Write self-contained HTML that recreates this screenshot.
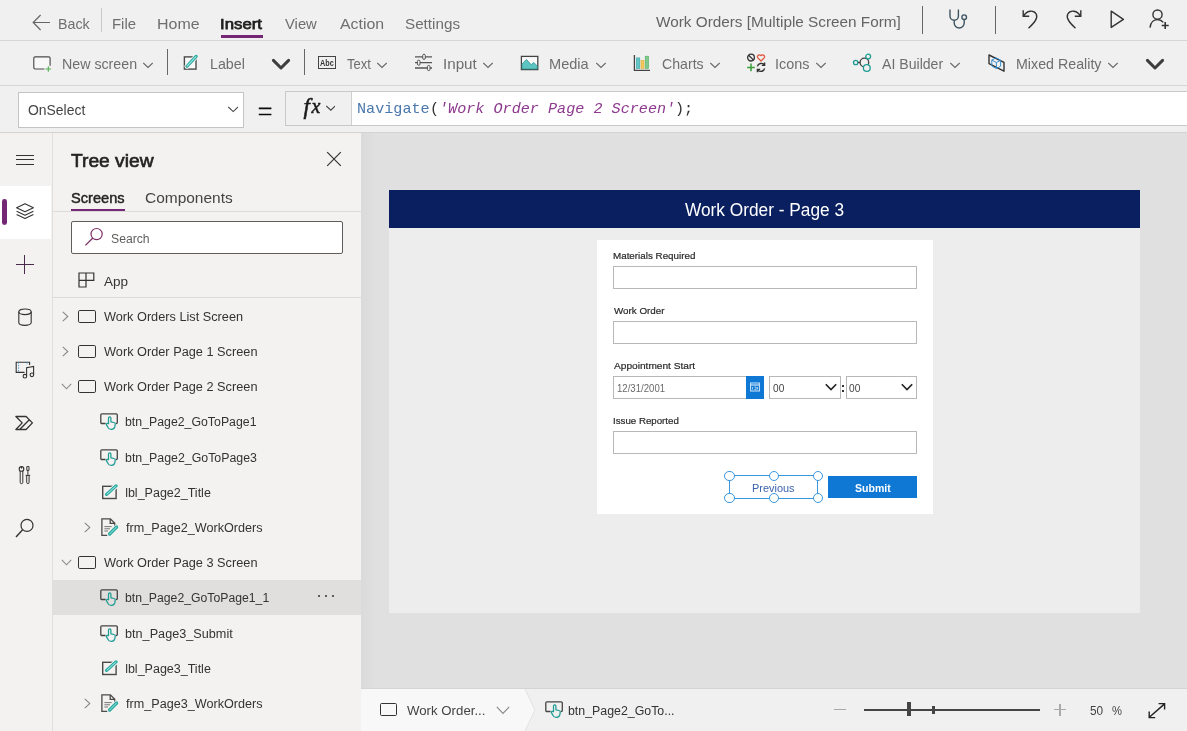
<!DOCTYPE html>
<html><head><meta charset="utf-8"><title>Power Apps</title>
<style>
html,body{margin:0;padding:0;}
body{width:1187px;height:731px;position:relative;overflow:hidden;background:#f3f2f1;font-family:"Liberation Sans",sans-serif;}
.r{position:absolute;box-sizing:border-box;display:block;}
.t{position:absolute;white-space:pre;transform-origin:0 50%;}
.mono{font-family:"Liberation Mono",monospace;}
.serif{font-family:"Liberation Serif",serif;}
#wrap{position:absolute;left:0;top:0;width:1187px;height:731px;overflow:hidden;will-change:transform;}
</style></head><body><div id="wrap">
<div class="r" style="left:0.00px;top:0.00px;width:1187.00px;height:132.00px;background:#f0f0f0;"></div>
<div class="r" style="left:0.00px;top:40.00px;width:1187.00px;height:1.00px;background:#d6d6d6;"></div>
<div class="r" style="left:0.00px;top:85.00px;width:1187.00px;height:1.00px;background:#d6d6d6;"></div>
<div class="r" style="left:0.00px;top:132.00px;width:1187.00px;height:1.00px;background:#d2d2d2;"></div>
<div class="r" style="left:0.00px;top:133.00px;width:52.00px;height:598.00px;background:#f3f2f1;"></div>
<div class="r" style="left:52.00px;top:133.00px;width:1.00px;height:598.00px;background:#e1dfdd;"></div>
<div class="r" style="left:53.00px;top:133.00px;width:308.00px;height:598.00px;background:#f3f2f1;"></div>
<div class="r" style="left:361.00px;top:133.00px;width:826.00px;height:556.00px;background:#e0e0e0;"></div>
<div class="r" style="left:361.00px;top:133.00px;width:14.00px;height:556.00px;background:linear-gradient(90deg,#dadada,#e0e0e0);"></div>
<div class="r" style="left:361.00px;top:688.00px;width:826.00px;height:43.00px;background:#f0f0f0;"></div>
<div class="r" style="left:361.00px;top:688.00px;width:826.00px;height:1.00px;background:#d4d4d4;"></div>
<svg class="r" style="left:32.00px;top:14.00px;" width="19" height="17" viewBox="0 0 19 17" fill="none"><path d="M18 8.5 H1.2 M8.6 1 L1.2 8.5 L8.6 16" stroke="#666" stroke-width="1.2"/></svg>
<span class="t" style="left:57.73px;top:16.00px;font-size:15px;line-height:15px;color:#6e6e6e;transform:scaleX(0.9483);">Back</span>
<div class="r" style="left:101.00px;top:8.00px;width:1.00px;height:24.00px;background:#c8c8c8;"></div>
<span class="t" style="left:112.08px;top:16.00px;font-size:15px;line-height:15px;color:#6e6e6e;transform:scaleX(0.9956);">File</span>
<span class="t" style="left:157.10px;top:16.00px;font-size:15px;line-height:15px;color:#6e6e6e;transform:scaleX(1.0641);">Home</span>
<span class="t" style="left:220.26px;top:16.00px;font-size:15px;line-height:15px;color:#201f1e;transform:scaleX(1.1183);-webkit-text-stroke:0.75px currentColor;">Insert</span>
<div class="r" style="left:221.00px;top:35.00px;width:42.00px;height:3.00px;background:#742774;"></div>
<span class="t" style="left:285.40px;top:16.00px;font-size:15px;line-height:15px;color:#6e6e6e;transform:scaleX(0.9860);">View</span>
<span class="t" style="left:339.60px;top:16.00px;font-size:15px;line-height:15px;color:#6e6e6e;transform:scaleX(1.0577);">Action</span>
<span class="t" style="left:404.97px;top:16.00px;font-size:15px;line-height:15px;color:#6e6e6e;transform:scaleX(1.0146);">Settings</span>
<span class="t" style="left:655.60px;top:14.00px;font-size:15px;line-height:15px;color:#646464;transform:scaleX(1.0212);">Work Orders [Multiple Screen Form]</span>
<div class="r" style="left:922.00px;top:6.00px;width:1.00px;height:28.00px;background:#666;"></div>
<div class="r" style="left:995.00px;top:6.00px;width:1.00px;height:28.00px;background:#666;"></div>
<svg class="r" style="left:947.00px;top:8.00px;" width="23" height="22" viewBox="0 0 23 22" fill="none"><path d="M3 1.5 V8 a4.2 4.2 0 0 0 8.4 0 V1.5 M7.2 12.2 V15 a5 5 0 0 0 10 0 V11.6" stroke="#3d5360" stroke-width="1.4"/><circle cx="17.2" cy="9.2" r="2.3" stroke="#3d5360" stroke-width="1.4"/></svg>
<svg class="r" style="left:1021.00px;top:8.00px;" width="19" height="22" viewBox="0 0 19 22" fill="none"><path d="M2.2 2.2 V8.2 H8.2 M2.6 8 C5.5 2.5 12.5 1.5 15.2 6 C17.3 9.8 14.5 14 7.5 20.2" stroke="#333" stroke-width="1.4"/></svg>
<svg class="r" style="left:1064.00px;top:8.00px;" width="19" height="22" viewBox="0 0 19 22" fill="none"><path d="M16.8 2.2 V8.2 H10.8 M16.4 8 C13.5 2.5 6.5 1.5 3.8 6 C1.7 9.8 4.5 14 11.5 20.2" stroke="#333" stroke-width="1.4"/></svg>
<svg class="r" style="left:1110.00px;top:10.00px;" width="15" height="19" viewBox="0 0 15 19" fill="none"><path d="M1.2 1.2 L13.4 9.3 L1.2 17.4 Z" stroke="#333" stroke-width="1.4" stroke-linejoin="round"/></svg>
<svg class="r" style="left:1149.00px;top:9.00px;" width="21" height="21" viewBox="0 0 21 21" fill="none"><circle cx="8.5" cy="5.6" r="4.6" stroke="#333" stroke-width="1.4"/><path d="M1 18.6 C1.6 13.2 5 10.6 8.5 10.6 C11 10.6 13 11.8 14.2 13.4" stroke="#333" stroke-width="1.4"/><path d="M16.2 13 V20 M12.7 16.5 H19.7" stroke="#333" stroke-width="1.6"/></svg>
<svg class="r" style="left:32.00px;top:55.00px;" width="21" height="18" viewBox="0 0 21 18" fill="none"><path d="M12.4 14 H3.2 a1.4 1.4 0 0 1 -1.4 -1.4 V3.3 A1.4 1.4 0 0 1 3.2 1.9 H16.7 a1.4 1.4 0 0 1 1.4 1.4 V10.8" fill="#f8f8f8" stroke="#4a4a4a" stroke-width="1.15"/><path d="M16.3 11.2 V16.8 M13.5 14 H19.1" stroke="#4fae4f" stroke-width="1.05"/></svg>
<span class="t" style="left:61.73px;top:56.00px;font-size:15px;line-height:15px;color:#6e6e6e;transform:scaleX(0.9478);">New screen</span>
<svg class="r" style="left:143.00px;top:62.00px;" width="10" height="6.8" viewBox="0 0 10 6.8" fill="none"><path d="M0.3 1 L5.0 5.3999999999999995 L9.7 1" stroke="#666" stroke-width="1.1"/></svg>
<div class="r" style="left:167.00px;top:49.00px;width:1.00px;height:26.00px;background:#666;"></div>
<svg class="r" style="left:183.00px;top:54.00px;" width="17" height="17" viewBox="0 0 17 17" fill="none"><rect x="1.4" y="2.9" width="11.6" height="12.2" fill="#fafafa" stroke="#4a4a4a" stroke-width="1.4"/><path d="M4 12.2 L13.2 2.4" stroke="#f0f0f0" stroke-width="5" stroke-linecap="round"/><path d="M4 12.2 L13.2 2.4" stroke="#25a79d" stroke-width="3.1" stroke-linecap="round"/><path d="M4.2 12 L13 2.6" stroke="#9be6de" stroke-width="1.1" stroke-linecap="round"/></svg>
<span class="t" style="left:210.03px;top:56.00px;font-size:15px;line-height:15px;color:#6e6e6e;transform:scaleX(0.9502);">Label</span>
<svg class="r" style="left:271.00px;top:58.00px;" width="20" height="13" viewBox="0 0 20 13" fill="none"><path d="M2.4 2.4 L10 10 L17.6 2.4" stroke="#3d3d3d" stroke-width="3" stroke-linecap="round" stroke-linejoin="round"/></svg>
<div class="r" style="left:304.00px;top:49.00px;width:1.00px;height:26.00px;background:#666;"></div>
<div class="r" style="left:318.00px;top:56.00px;width:18.00px;height:12.80px;border:1.3px solid #444;"></div>
<span class="t" style="left:320.19px;top:59.00px;font-size:8.5px;line-height:8.5px;color:#333;font-weight:700;transform:scaleX(0.8508);">Abc</span>
<span class="t" style="left:346.98px;top:56.00px;font-size:15px;line-height:15px;color:#6e6e6e;transform:scaleX(0.8697);">Text</span>
<svg class="r" style="left:377.00px;top:62.00px;" width="10" height="6.8" viewBox="0 0 10 6.8" fill="none"><path d="M0.3 1 L5.0 5.3999999999999995 L9.7 1" stroke="#666" stroke-width="1.1"/></svg>
<svg class="r" style="left:415.00px;top:53.00px;" width="18" height="19" viewBox="0 0 18 19" fill="none"><path d="M0 3.8 H17 M0 9.7 H17 M0 15 H17" stroke="#555" stroke-width="1.3"/><rect x="7.7" y="1.2" width="2.6" height="5.2" rx="1.3" fill="#f0f0f0" stroke="#555" stroke-width="1"/><rect x="2.4" y="7.1" width="2.6" height="5.2" rx="1.3" fill="#f0f0f0" stroke="#555" stroke-width="1"/><rect x="12.4" y="12.4" width="2.6" height="5.2" rx="1.3" fill="#f0f0f0" stroke="#555" stroke-width="1"/></svg>
<span class="t" style="left:442.81px;top:56.00px;font-size:15px;line-height:15px;color:#6e6e6e;transform:scaleX(1.0125);">Input</span>
<svg class="r" style="left:483.00px;top:62.00px;" width="10" height="6.8" viewBox="0 0 10 6.8" fill="none"><path d="M0.3 1 L5.0 5.3999999999999995 L9.7 1" stroke="#666" stroke-width="1.1"/></svg>
<svg class="r" style="left:520.00px;top:55.00px;" width="19" height="16" viewBox="0 0 19 16" fill="none"><rect x="1.4" y="1.4" width="16.4" height="13.2" fill="#fafafa" stroke="#444" stroke-width="1.3"/><path d="M2 14 V9 L6.4 4.4 L11.2 9.6 L13.8 7.4 L17.2 11 V14 Z" fill="#5cc5c2" stroke="#2d8f8c" stroke-width="0.7" stroke-linejoin="round"/></svg>
<span class="t" style="left:548.81px;top:56.00px;font-size:15px;line-height:15px;color:#6e6e6e;transform:scaleX(0.9711);">Media</span>
<svg class="r" style="left:596.00px;top:62.00px;" width="10" height="6.8" viewBox="0 0 10 6.8" fill="none"><path d="M0.3 1 L5.0 5.3999999999999995 L9.7 1" stroke="#666" stroke-width="1.1"/></svg>
<svg class="r" style="left:633.00px;top:54.00px;" width="18" height="18" viewBox="0 0 18 18" fill="none"><path d="M1.4 1 V16.4 H17" stroke="#444" stroke-width="1.3"/><rect x="3.4" y="3.9" width="3.4" height="10.6" fill="#62c6c6" stroke="#3aa5a5" stroke-width="0.6"/><rect x="8" y="6.4" width="3" height="8.1" fill="#f6c85a" stroke="#e0ab38" stroke-width="0.6"/><rect x="12.2" y="2.2" width="3.4" height="12.3" fill="#7fc98a" stroke="#58ad66" stroke-width="0.6"/></svg>
<span class="t" style="left:661.89px;top:56.00px;font-size:15px;line-height:15px;color:#6e6e6e;transform:scaleX(0.9423);">Charts</span>
<svg class="r" style="left:710.00px;top:62.00px;" width="10" height="6.8" viewBox="0 0 10 6.8" fill="none"><path d="M0.3 1 L5.0 5.3999999999999995 L9.7 1" stroke="#666" stroke-width="1.1"/></svg>
<svg class="r" style="left:746.00px;top:53.00px;" width="21" height="20" viewBox="0 0 21 20" fill="none"><circle cx="5" cy="4.6" r="3.4" stroke="#333" stroke-width="1.3"/><path d="M2.7 2.3 L7.3 6.9" stroke="#333" stroke-width="1.3"/><path d="M15 8 L11.6 4.6 a2 2 0 0 1 3.4 -2 a2 2 0 0 1 3.4 2 Z" stroke="#e2553d" stroke-width="1.3" stroke-linejoin="round"/><path d="M5 10.6 V18.2 M1.2 14.4 H8.8" stroke="#3a9b3a" stroke-width="1.5"/><path d="M11.4 13.4 a3.8 3.8 0 0 1 6.8 -1.4 M18.6 15.4 a3.8 3.8 0 0 1 -6.8 1.4 M18.6 9.6 V12.4 H15.8 M11.4 19.2 V16.4 H14.2" stroke="#333" stroke-width="1.4"/></svg>
<span class="t" style="left:775.08px;top:56.00px;font-size:15px;line-height:15px;color:#6e6e6e;transform:scaleX(0.9588);">Icons</span>
<svg class="r" style="left:816.00px;top:62.00px;" width="10" height="6.8" viewBox="0 0 10 6.8" fill="none"><path d="M0.3 1 L5.0 5.3999999999999995 L9.7 1" stroke="#666" stroke-width="1.1"/></svg>
<svg class="r" style="left:852.00px;top:53.00px;" width="21" height="20" viewBox="0 0 21 20" fill="none"><circle cx="12.4" cy="9.4" r="4.3" stroke="#444" stroke-width="1.3"/><circle cx="3.7" cy="9.5" r="2.2" fill="#f0f0f0" stroke="#1f9c93" stroke-width="1.3"/><circle cx="16.2" cy="3.6" r="2.4" fill="#f0f0f0" stroke="#1f9c93" stroke-width="1.3"/><circle cx="14.8" cy="15" r="3.4" fill="#f0f0f0" stroke="#1f9c93" stroke-width="1.3"/><path d="M5.9 9.5 H8.1" stroke="#444" stroke-width="1.3"/></svg>
<span class="t" style="left:882.40px;top:56.00px;font-size:15px;line-height:15px;color:#6e6e6e;transform:scaleX(0.9405);">AI Builder</span>
<svg class="r" style="left:950.00px;top:62.00px;" width="10" height="6.8" viewBox="0 0 10 6.8" fill="none"><path d="M0.3 1 L5.0 5.3999999999999995 L9.7 1" stroke="#666" stroke-width="1.1"/></svg>
<svg class="r" style="left:988.00px;top:54.00px;" width="18" height="18" viewBox="0 0 18 18" fill="none"><path d="M1 1 L16 8.4 V17.2 L1 9.6 Z" stroke="#333" stroke-width="1.4" stroke-linejoin="round"/><path d="M3.8 6 L8 3.8 L12.6 6.2 V12.2 L8.6 14.6 L3.8 12 Z M8.4 8.6 V14.6 M3.8 6 L8.4 8.6 L12.6 6.2" stroke="#3a8fd0" stroke-width="1" stroke-linejoin="round"/></svg>
<span class="t" style="left:1015.53px;top:56.00px;font-size:15px;line-height:15px;color:#6e6e6e;transform:scaleX(0.9496);">Mixed Reality</span>
<svg class="r" style="left:1108.00px;top:62.00px;" width="10" height="6.8" viewBox="0 0 10 6.8" fill="none"><path d="M0.3 1 L5.0 5.3999999999999995 L9.7 1" stroke="#666" stroke-width="1.1"/></svg>
<svg class="r" style="left:1145.00px;top:58.00px;" width="20" height="13" viewBox="0 0 20 13" fill="none"><path d="M2.4 2.4 L10 10 L17.6 2.4" stroke="#3d3d3d" stroke-width="3" stroke-linecap="round" stroke-linejoin="round"/></svg>
<div class="r" style="left:18.00px;top:92.00px;width:226.00px;height:36.00px;background:#ffffff;border:1px solid #c4c4c4;"></div>
<span class="t" style="left:27.82px;top:102.00px;font-size:15px;line-height:15px;color:#444;transform:scaleX(0.9279);">OnSelect</span>
<svg class="r" style="left:228.00px;top:106.30px;" width="10.4" height="7" viewBox="0 0 10.4 7" fill="none"><path d="M0.3 1 L5.2 5.6 L10.1 1" stroke="#444" stroke-width="1.1"/></svg>
<svg class="r" style="left:258.00px;top:105.00px;" width="14" height="12" viewBox="0 0 14 12" fill="none"><path d="M0.8 3.3 H13.4 M0.8 9.5 H13.4" stroke="#0a0a0a" stroke-width="1.7"/></svg>
<div class="r" style="left:285.00px;top:91.00px;width:902.00px;height:35.00px;background:#ffffff;border:1px solid #c8c8c8;border-right:none;"></div>
<div class="r" style="left:286.00px;top:92.00px;width:65.60px;height:33.00px;background:#f0f0f0;border-right:1px solid #d0d0d0;"></div>
<span class="t serif" style="left:303.60px;top:95.00px;font-size:23px;line-height:23px;color:#1a1a1a;font-style:italic;-webkit-text-stroke:0.55px currentColor;">f</span>
<span class="t serif" style="left:311.40px;top:96.00px;font-size:20px;line-height:20px;color:#1a1a1a;font-style:italic;-webkit-text-stroke:0.55px currentColor;">x</span>
<svg class="r" style="left:325.60px;top:105.40px;" width="9.6" height="6.6" viewBox="0 0 9.6 6.6" fill="none"><path d="M0.3 1 L4.8 5.199999999999999 L9.299999999999999 1" stroke="#444" stroke-width="1.1"/></svg>
<span class="t mono" style="left:357.30px;top:102.00px;font-size:15px;line-height:15px;color:#4a78ad;transform:scaleX(1.0089);">Navigate</span>
<span class="t mono" style="left:429.94px;top:102.00px;font-size:15px;line-height:15px;color:#333;transform:scaleX(1.0089);">(</span>
<span class="t mono" style="left:439.02px;top:102.00px;font-size:15px;line-height:15px;color:#8e3a8e;font-style:italic;transform:scaleX(1.0089);">'Work Order Page 2 Screen'</span>
<span class="t mono" style="left:675.10px;top:102.00px;font-size:15px;line-height:15px;color:#333;transform:scaleX(1.0089);">);</span>
<div class="r" style="left:15.70px;top:155.00px;width:18.00px;height:1.20px;background:#333;"></div>
<div class="r" style="left:15.70px;top:159.30px;width:18.00px;height:1.20px;background:#333;"></div>
<div class="r" style="left:15.70px;top:163.60px;width:18.00px;height:1.20px;background:#333;"></div>
<div class="r" style="left:0.00px;top:186.00px;width:51.00px;height:53.00px;background:#ffffff;"></div>
<div class="r" style="left:2.00px;top:199.00px;width:4.80px;height:25.50px;background:#742774;border-radius:2.4px;"></div>
<svg class="r" style="left:15.00px;top:203.00px;" width="20" height="17" viewBox="0 0 20 17" fill="none"><path d="M10 0.8 L18.4 4.8 L10 8.8 L1.6 4.8 Z M1.6 8.2 L10 12.2 L18.4 8.2 M1.6 11.6 L10 15.6 L18.4 11.6" stroke="#333" stroke-width="1.1" stroke-linejoin="round"/></svg>
<div class="r" style="left:15.70px;top:263.80px;width:18.20px;height:1.30px;background:#4a2a4a;"></div>
<div class="r" style="left:24.10px;top:255.40px;width:1.30px;height:18.20px;background:#4a2a4a;"></div>
<svg class="r" style="left:17.00px;top:308.00px;" width="16" height="19" viewBox="0 0 16 19" fill="none"><ellipse cx="8" cy="3.8" rx="6.2" ry="2.8" stroke="#333" stroke-width="1.1"/><path d="M1.8 3.8 V14.6 a6.2 2.8 0 0 0 12.4 0 V3.8" stroke="#333" stroke-width="1.1"/></svg>
<svg class="r" style="left:15.00px;top:361.00px;" width="20" height="19" viewBox="0 0 20 19" fill="none"><path d="M9.6 11.4 H1.2 V1.2 H14.6 V4" stroke="#333" stroke-width="1.1"/><path d="M3.6 1.2 V11.4 M12.2 1.2 V4" stroke="#3a8fd0" stroke-width="0.9" stroke-dasharray="1.4 1.2"/><path d="M11.6 14.8 V6.6 L18.6 5.4 V13.4" stroke="#333" stroke-width="1.1"/><circle cx="9.9" cy="15.2" r="1.8" stroke="#333" stroke-width="1.1"/><circle cx="16.9" cy="13.8" r="1.8" stroke="#333" stroke-width="1.1"/></svg>
<svg class="r" style="left:15.00px;top:415.00px;" width="20" height="17" viewBox="0 0 20 17" fill="none"><path d="M0.9 1.5 H11.1 L17.4 7.9 L11.1 14.5 H0.9 L7.2 7.9 Z M4.6 14.5 L14.3 4.8" stroke="#333" stroke-width="1.3" stroke-linejoin="round"/></svg>
<svg class="r" style="left:18.00px;top:465.00px;" width="14" height="21" viewBox="0 0 14 21" fill="none"><path d="M2.2 6 V17.4 a1.3 1.3 0 0 0 2.6 0 V6" stroke="#333" stroke-width="1"/><circle cx="3.5" cy="3.9" r="2.3" stroke="#333" stroke-width="1.1"/><path d="M3.5 1.4 V3.6" stroke="#333" stroke-width="1"/><path d="M8.8 1.6 H11 V5.4 H8.8 Z M9.9 5.4 V10.4 M7.6 10.4 H12.2 M8.7 10.6 V17.4 a1.2 1.2 0 0 0 2.4 0 V10.6" stroke="#333" stroke-width="1"/></svg>
<svg class="r" style="left:15.00px;top:518.00px;" width="20" height="21" viewBox="0 0 20 21" fill="none"><circle cx="12" cy="7.4" r="6" stroke="#333" stroke-width="1.2"/><path d="M7.6 11.8 L1 19" stroke="#333" stroke-width="1.4"/></svg>
<span class="t" style="left:71.10px;top:152.00px;font-size:18px;line-height:18px;color:#252423;transform:scaleX(1.0671);-webkit-text-stroke:0.65px currentColor;">Tree view</span>
<svg class="r" style="left:326.00px;top:151.00px;" width="16" height="16" viewBox="0 0 16 16" fill="none"><path d="M1.2 1.2 L14.8 14.8 M14.8 1.2 L1.2 14.8" stroke="#333" stroke-width="1.2"/></svg>
<span class="t" style="left:71.17px;top:191.00px;font-size:14.5px;line-height:14.5px;color:#252423;transform:scaleX(1.0072);-webkit-text-stroke:0.45px currentColor;">Screens</span>
<span class="t" style="left:144.83px;top:191.00px;font-size:14.5px;line-height:14.5px;color:#444;transform:scaleX(1.0663);">Components</span>
<div class="r" style="left:71.00px;top:209.00px;width:54.00px;height:2.00px;background:#742774;"></div>
<div class="r" style="left:53.00px;top:211.00px;width:308.00px;height:1.00px;background:#dddbd9;"></div>
<div class="r" style="left:71.30px;top:221.00px;width:271.50px;height:33.20px;background:#ffffff;border:1px solid #605e5c;border-radius:2px;"></div>
<svg class="r" style="left:84.00px;top:227.00px;" width="20" height="20" viewBox="0 0 20 20" fill="none"><circle cx="12.6" cy="7.1" r="5.6" stroke="#7b2f63" stroke-width="1.2"/><path d="M8.6 11.2 L1.4 18.4" stroke="#7b2f63" stroke-width="1.3"/></svg>
<span class="t" style="left:111.41px;top:233.00px;font-size:12.5px;line-height:12.5px;color:#605e5c;transform:scaleX(0.9746);">Search</span>
<svg class="r" style="left:78.00px;top:272.00px;" width="17" height="16" viewBox="0 0 17 16" fill="none"><path d="M1 1 H15.8 V8.4 H8 V15 H1 Z M8 1 V8.4 M1 8.4 H8" stroke="#333" stroke-width="1.2"/></svg>
<span class="t" style="left:103.90px;top:276.00px;font-size:12.5px;line-height:12.5px;color:#333;transform:scaleX(1.0805);">App</span>
<div class="r" style="left:53.00px;top:297.00px;width:308.00px;height:1.00px;background:#dddbd9;"></div>
<div class="r" style="left:53.00px;top:580.00px;width:308.00px;height:34.80px;background:#e1dfdd;"></div>
<svg class="r" style="left:62.00px;top:310.90px;" width="7" height="11" viewBox="0 0 7 11" fill="none"><path d="M0.8 0.8 L5.8 5.5 L0.8 10.2" stroke="#8a8886" stroke-width="1.1"/></svg>
<div class="r" style="left:78.20px;top:310.00px;width:17.80px;height:12.80px;border:1.2px solid #333;border-radius:1.8px;"></div>
<span class="t" style="left:104.00px;top:311.00px;font-size:12.5px;line-height:12.5px;color:#333;transform:scaleX(1.0178);">Work Orders List Screen</span>
<svg class="r" style="left:62.00px;top:345.90px;" width="7" height="11" viewBox="0 0 7 11" fill="none"><path d="M0.8 0.8 L5.8 5.5 L0.8 10.2" stroke="#8a8886" stroke-width="1.1"/></svg>
<div class="r" style="left:78.20px;top:345.00px;width:17.80px;height:12.80px;border:1.2px solid #333;border-radius:1.8px;"></div>
<span class="t" style="left:104.00px;top:346.00px;font-size:12.5px;line-height:12.5px;color:#333;transform:scaleX(1.0195);">Work Order Page 1 Screen</span>
<svg class="r" style="left:60.50px;top:383.40px;" width="11" height="7" viewBox="0 0 11 7" fill="none"><path d="M0.8 0.8 L5.5 5.8 L10.2 0.8" stroke="#8a8886" stroke-width="1.1"/></svg>
<div class="r" style="left:78.20px;top:380.00px;width:17.80px;height:12.80px;border:1.2px solid #333;border-radius:1.8px;"></div>
<span class="t" style="left:104.00px;top:381.00px;font-size:12.5px;line-height:12.5px;color:#333;transform:scaleX(1.0195);">Work Order Page 2 Screen</span>
<svg class="r" style="left:100.00px;top:413.00px;" width="19" height="19" viewBox="0 0 19 19" fill="none"><path d="M5.6 10.5 H1.9 a1.1 1.1 0 0 1 -1.1 -1.1 V1.9 a1.1 1.1 0 0 1 1.1 -1.1 H16.2 a1.1 1.1 0 0 1 1.1 1.1 V9.4 a1.1 1.1 0 0 1 -1.1 1.1 H15.8" stroke="#444" stroke-width="1.3"/><path d="M8.5 11.2 V5 a1.2 1.2 0 0 1 2.4 0 V8.8 L14 9.5 a1.5 1.5 0 0 1 1.2 1.7 L14.9 13.4 a3.7 3.7 0 0 1 -7.1 0.7 L6.4 11.6 a1.05 1.05 0 0 1 1.9 -0.8" stroke="#1f9c93" stroke-width="1.25" stroke-linejoin="round"/></svg>
<span class="t" style="left:125.16px;top:416.00px;font-size:12.5px;line-height:12.5px;color:#333;transform:scaleX(0.9854);">btn_Page2_GoToPage1</span>
<svg class="r" style="left:100.00px;top:449.00px;" width="19" height="19" viewBox="0 0 19 19" fill="none"><path d="M5.6 10.5 H1.9 a1.1 1.1 0 0 1 -1.1 -1.1 V1.9 a1.1 1.1 0 0 1 1.1 -1.1 H16.2 a1.1 1.1 0 0 1 1.1 1.1 V9.4 a1.1 1.1 0 0 1 -1.1 1.1 H15.8" stroke="#444" stroke-width="1.3"/><path d="M8.5 11.2 V5 a1.2 1.2 0 0 1 2.4 0 V8.8 L14 9.5 a1.5 1.5 0 0 1 1.2 1.7 L14.9 13.4 a3.7 3.7 0 0 1 -7.1 0.7 L6.4 11.6 a1.05 1.05 0 0 1 1.9 -0.8" stroke="#1f9c93" stroke-width="1.25" stroke-linejoin="round"/></svg>
<span class="t" style="left:125.16px;top:452.00px;font-size:12.5px;line-height:12.5px;color:#333;transform:scaleX(0.9890);">btn_Page2_GoToPage3</span>
<svg class="r" style="left:101.50px;top:483.80px;" width="17" height="16" viewBox="0 0 17 16" fill="none"><rect x="0.7" y="2.3" width="13.4" height="12.2" stroke="#4a4a4a" stroke-width="1.4"/><path d="M4.6 10.4 L14 1.9" stroke="#f3f2f1" stroke-width="5.2" stroke-linecap="round"/><path d="M4.6 10.4 L14 1.9" stroke="#25a79d" stroke-width="3.2" stroke-linecap="round"/><path d="M4.8 10.2 L13.8 2.1" stroke="#8fe0d8" stroke-width="1.1" stroke-linecap="round"/></svg>
<span class="t" style="left:125.15px;top:487.00px;font-size:12.5px;line-height:12.5px;color:#333;">lbl_Page2_Title</span>
<svg class="r" style="left:84.00px;top:521.90px;" width="7" height="11" viewBox="0 0 7 11" fill="none"><path d="M0.8 0.8 L5.8 5.5 L0.8 10.2" stroke="#8a8886" stroke-width="1.1"/></svg>
<svg class="r" style="left:100.60px;top:517.50px;" width="19" height="19" viewBox="0 0 19 19" fill="none"><path d="M6.4 17.4 H0.9 V0.8 H9.4 L13.8 5.2 V8.6 M9.2 1 V5.4 H13.6" stroke="#4a4a4a" stroke-width="1.3"/><path d="M3.4 8.6 H10.6 M3.4 10.8 H9 M3.4 13 H7" stroke="#666" stroke-width="0.9"/><path d="M8.6 16 L15.6 9" stroke="#f3f2f1" stroke-width="5" stroke-linecap="round"/><path d="M8.6 16 L15.6 9" stroke="#25a79d" stroke-width="3.2" stroke-linecap="round"/><path d="M8.8 15.8 L15.4 9.2" stroke="#7ad6cd" stroke-width="1.1" stroke-linecap="round"/></svg>
<span class="t" style="left:125.77px;top:522.00px;font-size:12.5px;line-height:12.5px;color:#333;transform:scaleX(1.0093);">frm_Page2_WorkOrders</span>
<svg class="r" style="left:60.50px;top:559.40px;" width="11" height="7" viewBox="0 0 11 7" fill="none"><path d="M0.8 0.8 L5.5 5.8 L10.2 0.8" stroke="#8a8886" stroke-width="1.1"/></svg>
<div class="r" style="left:78.20px;top:556.00px;width:17.80px;height:12.80px;border:1.2px solid #333;border-radius:1.8px;"></div>
<span class="t" style="left:104.00px;top:557.00px;font-size:12.5px;line-height:12.5px;color:#333;transform:scaleX(1.0195);">Work Order Page 3 Screen</span>
<svg class="r" style="left:100.00px;top:589.00px;" width="19" height="19" viewBox="0 0 19 19" fill="none"><path d="M5.6 10.5 H1.9 a1.1 1.1 0 0 1 -1.1 -1.1 V1.9 a1.1 1.1 0 0 1 1.1 -1.1 H16.2 a1.1 1.1 0 0 1 1.1 1.1 V9.4 a1.1 1.1 0 0 1 -1.1 1.1 H15.8" stroke="#444" stroke-width="1.3"/><path d="M8.5 11.2 V5 a1.2 1.2 0 0 1 2.4 0 V8.8 L14 9.5 a1.5 1.5 0 0 1 1.2 1.7 L14.9 13.4 a3.7 3.7 0 0 1 -7.1 0.7 L6.4 11.6 a1.05 1.05 0 0 1 1.9 -0.8" stroke="#1f9c93" stroke-width="1.25" stroke-linejoin="round"/></svg>
<span class="t" style="left:125.17px;top:592.00px;font-size:12.5px;line-height:12.5px;color:#333;transform:scaleX(0.9788);">btn_Page2_GoToPage1_1</span>
<svg class="r" style="left:100.00px;top:625.00px;" width="19" height="19" viewBox="0 0 19 19" fill="none"><path d="M5.6 10.5 H1.9 a1.1 1.1 0 0 1 -1.1 -1.1 V1.9 a1.1 1.1 0 0 1 1.1 -1.1 H16.2 a1.1 1.1 0 0 1 1.1 1.1 V9.4 a1.1 1.1 0 0 1 -1.1 1.1 H15.8" stroke="#444" stroke-width="1.3"/><path d="M8.5 11.2 V5 a1.2 1.2 0 0 1 2.4 0 V8.8 L14 9.5 a1.5 1.5 0 0 1 1.2 1.7 L14.9 13.4 a3.7 3.7 0 0 1 -7.1 0.7 L6.4 11.6 a1.05 1.05 0 0 1 1.9 -0.8" stroke="#1f9c93" stroke-width="1.25" stroke-linejoin="round"/></svg>
<span class="t" style="left:125.14px;top:628.00px;font-size:12.5px;line-height:12.5px;color:#333;transform:scaleX(1.0130);">btn_Page3_Submit</span>
<svg class="r" style="left:101.50px;top:659.80px;" width="17" height="16" viewBox="0 0 17 16" fill="none"><rect x="0.7" y="2.3" width="13.4" height="12.2" stroke="#4a4a4a" stroke-width="1.4"/><path d="M4.6 10.4 L14 1.9" stroke="#f3f2f1" stroke-width="5.2" stroke-linecap="round"/><path d="M4.6 10.4 L14 1.9" stroke="#25a79d" stroke-width="3.2" stroke-linecap="round"/><path d="M4.8 10.2 L13.8 2.1" stroke="#8fe0d8" stroke-width="1.1" stroke-linecap="round"/></svg>
<span class="t" style="left:125.15px;top:663.00px;font-size:12.5px;line-height:12.5px;color:#333;">lbl_Page3_Title</span>
<svg class="r" style="left:84.00px;top:697.90px;" width="7" height="11" viewBox="0 0 7 11" fill="none"><path d="M0.8 0.8 L5.8 5.5 L0.8 10.2" stroke="#8a8886" stroke-width="1.1"/></svg>
<svg class="r" style="left:100.60px;top:693.50px;" width="19" height="19" viewBox="0 0 19 19" fill="none"><path d="M6.4 17.4 H0.9 V0.8 H9.4 L13.8 5.2 V8.6 M9.2 1 V5.4 H13.6" stroke="#4a4a4a" stroke-width="1.3"/><path d="M3.4 8.6 H10.6 M3.4 10.8 H9 M3.4 13 H7" stroke="#666" stroke-width="0.9"/><path d="M8.6 16 L15.6 9" stroke="#f3f2f1" stroke-width="5" stroke-linecap="round"/><path d="M8.6 16 L15.6 9" stroke="#25a79d" stroke-width="3.2" stroke-linecap="round"/><path d="M8.8 15.8 L15.4 9.2" stroke="#7ad6cd" stroke-width="1.1" stroke-linecap="round"/></svg>
<span class="t" style="left:125.77px;top:698.00px;font-size:12.5px;line-height:12.5px;color:#333;transform:scaleX(1.0093);">frm_Page3_WorkOrders</span>
<div class="r" style="left:318.30px;top:594.90px;width:2.00px;height:2.00px;background:#333;border-radius:1px;"></div>
<div class="r" style="left:325.30px;top:594.90px;width:2.00px;height:2.00px;background:#333;border-radius:1px;"></div>
<div class="r" style="left:332.30px;top:594.90px;width:2.00px;height:2.00px;background:#333;border-radius:1px;"></div>
<div class="r" style="left:388.50px;top:189.80px;width:751.90px;height:423.30px;background:#ededed;"></div>
<div class="r" style="left:388.50px;top:189.80px;width:751.90px;height:38.70px;background:#0a1f60;"></div>
<span class="t" style="left:685.00px;top:202.00px;font-size:17.5px;line-height:17.5px;color:#ffffff;transform:scaleX(0.9871);">Work Order - Page 3</span>
<div class="r" style="left:596.50px;top:239.60px;width:336.50px;height:274.80px;background:#ffffff;"></div>
<span class="t" style="left:612.83px;top:251.00px;font-size:9.5px;line-height:9.5px;color:#2a2a2a;transform:scaleX(1.0331);-webkit-text-stroke:0.2px currentColor;">Materials Required</span>
<div class="r" style="left:613.00px;top:266.00px;width:303.70px;height:22.70px;background:#ffffff;border:1px solid #b8b8b8;"></div>
<span class="t" style="left:613.60px;top:306.00px;font-size:9.5px;line-height:9.5px;color:#2a2a2a;transform:scaleX(1.0332);-webkit-text-stroke:0.2px currentColor;">Work Order</span>
<div class="r" style="left:613.00px;top:321.10px;width:303.70px;height:22.50px;background:#ffffff;border:1px solid #b8b8b8;"></div>
<span class="t" style="left:613.60px;top:361.00px;font-size:9.5px;line-height:9.5px;color:#2a2a2a;transform:scaleX(1.0671);-webkit-text-stroke:0.2px currentColor;">Appointment Start</span>
<div class="r" style="left:613.20px;top:376.20px;width:151.20px;height:22.40px;background:#ffffff;border:1px solid #b8b8b8;"></div>
<span class="t" style="left:616.51px;top:383.00px;font-size:10.5px;line-height:10.5px;color:#6a6a6a;transform:scaleX(0.9148);">12/31/2001</span>
<div class="r" style="left:746.00px;top:376.20px;width:18.40px;height:22.40px;background:#0f78d4;"></div>
<svg class="r" style="left:750.20px;top:382.20px;" width="10" height="10" viewBox="0 0 10 10" fill="none"><rect x="0.6" y="1" width="8.8" height="8" stroke="#cfe6fa" stroke-width="1"/><path d="M0.6 3 H9.4" stroke="#cfe6fa" stroke-width="1.2"/><path d="M2.6 5 V7.6 M4.4 5 H6 V7.6 H4.4 M7.4 5 V7.6" stroke="#cfe6fa" stroke-width="0.8"/></svg>
<div class="r" style="left:769.30px;top:376.00px;width:71.40px;height:22.70px;background:#ffffff;border:1px solid #b8b8b8;"></div>
<span class="t" style="left:772.84px;top:383.00px;font-size:10.5px;line-height:10.5px;color:#444;transform:scaleX(0.9636);">00</span>
<svg class="r" style="left:825.00px;top:382.80px;" width="12" height="9" viewBox="0 0 12 9" fill="none"><path d="M0.8 1.2 L6 6.6 L11.2 1.2" stroke="#222" stroke-width="1.6"/></svg>
<div class="r" style="left:842.20px;top:385.00px;width:2.00px;height:2.00px;background:#333;"></div>
<div class="r" style="left:842.20px;top:390.00px;width:2.00px;height:2.00px;background:#333;"></div>
<div class="r" style="left:845.70px;top:376.00px;width:71.00px;height:22.70px;background:#ffffff;border:1px solid #b8b8b8;"></div>
<span class="t" style="left:849.24px;top:383.00px;font-size:10.5px;line-height:10.5px;color:#444;transform:scaleX(0.9636);">00</span>
<svg class="r" style="left:901.20px;top:382.80px;" width="12" height="9" viewBox="0 0 12 9" fill="none"><path d="M0.8 1.2 L6 6.6 L11.2 1.2" stroke="#222" stroke-width="1.6"/></svg>
<span class="t" style="left:612.71px;top:416.00px;font-size:9.5px;line-height:9.5px;color:#2a2a2a;transform:scaleX(1.0222);-webkit-text-stroke:0.2px currentColor;">Issue Reported</span>
<div class="r" style="left:613.00px;top:431.00px;width:303.70px;height:22.70px;background:#ffffff;border:1px solid #b8b8b8;"></div>
<div class="r" style="left:728.80px;top:475.00px;width:89.60px;height:23.60px;background:#ffffff;border:1.4px solid #3a96dd;"></div>
<span class="t" style="left:752.42px;top:483.00px;font-size:10.5px;line-height:10.5px;color:#3b64ad;transform:scaleX(1.0415);">Previous</span>
<div class="r" style="left:724.20px;top:470.50px;width:10.60px;height:10.60px;background:#ffffff;border:1.4px solid #3a96dd;border-radius:50%;"></div>
<div class="r" style="left:724.20px;top:492.70px;width:10.60px;height:10.60px;background:#ffffff;border:1.4px solid #3a96dd;border-radius:50%;"></div>
<div class="r" style="left:768.50px;top:470.50px;width:10.60px;height:10.60px;background:#ffffff;border:1.4px solid #3a96dd;border-radius:50%;"></div>
<div class="r" style="left:768.50px;top:492.70px;width:10.60px;height:10.60px;background:#ffffff;border:1.4px solid #3a96dd;border-radius:50%;"></div>
<div class="r" style="left:812.80px;top:470.50px;width:10.60px;height:10.60px;background:#ffffff;border:1.4px solid #3a96dd;border-radius:50%;"></div>
<div class="r" style="left:812.80px;top:492.70px;width:10.60px;height:10.60px;background:#ffffff;border:1.4px solid #3a96dd;border-radius:50%;"></div>
<div class="r" style="left:828.30px;top:475.80px;width:88.40px;height:22.40px;background:#0f78d4;"></div>
<span class="t" style="left:854.95px;top:483.00px;font-size:10.5px;line-height:10.5px;color:#ffffff;font-weight:700;transform:scaleX(1.0043);">Submit</span>
<svg class="r" style="left:361.00px;top:689.00px;" width="176" height="42" viewBox="0 0 176 42" fill="none"><path d="M0 0 H164 L174 21 L164 42 H0 Z" fill="#f8f8f8"/><path d="M164 0 L174 21 L164 42" stroke="#e2e2e2" stroke-width="1"/></svg>
<div class="r" style="left:380.00px;top:703.40px;width:17.00px;height:13.00px;border:1.2px solid #333;border-radius:1.6px;"></div>
<span class="t" style="left:406.60px;top:705.00px;font-size:12.5px;line-height:12.5px;color:#444;transform:scaleX(1.0589);">Work Order...</span>
<svg class="r" style="left:495.50px;top:705.50px;" width="14" height="9" viewBox="0 0 14 9" fill="none"><path d="M0.8 0.8 L7 7.4 L13.2 0.8" stroke="#8a8886" stroke-width="1.1"/></svg>
<svg class="r" style="left:544.60px;top:701.40px;" width="19" height="19" viewBox="0 0 19 19" fill="none"><path d="M5.6 10.5 H1.9 a1.1 1.1 0 0 1 -1.1 -1.1 V1.9 a1.1 1.1 0 0 1 1.1 -1.1 H16.2 a1.1 1.1 0 0 1 1.1 1.1 V9.4 a1.1 1.1 0 0 1 -1.1 1.1 H15.8" stroke="#444" stroke-width="1.3"/><path d="M8.5 11.2 V5 a1.2 1.2 0 0 1 2.4 0 V8.8 L14 9.5 a1.5 1.5 0 0 1 1.2 1.7 L14.9 13.4 a3.7 3.7 0 0 1 -7.1 0.7 L6.4 11.6 a1.05 1.05 0 0 1 1.9 -0.8" stroke="#1f9c93" stroke-width="1.25" stroke-linejoin="round"/></svg>
<span class="t" style="left:568.06px;top:705.00px;font-size:12.5px;line-height:12.5px;color:#333;transform:scaleX(0.9889);">btn_Page2_GoTo...</span>
<div class="r" style="left:833.90px;top:708.80px;width:12.40px;height:1.40px;background:#aaa;"></div>
<div class="r" style="left:863.90px;top:709.10px;width:176.30px;height:1.80px;background:#444;"></div>
<div class="r" style="left:906.90px;top:701.60px;width:4.40px;height:14.40px;background:#444;"></div>
<div class="r" style="left:932.00px;top:706.30px;width:3.00px;height:7.80px;background:#444;"></div>
<div class="r" style="left:1054.00px;top:708.80px;width:12.00px;height:1.40px;background:#aaa;"></div>
<div class="r" style="left:1059.30px;top:703.50px;width:1.40px;height:12.00px;background:#aaa;"></div>
<span class="t" style="left:1090.13px;top:705.00px;font-size:12.5px;line-height:12.5px;color:#444;transform:scaleX(0.9462);">50</span>
<span class="t" style="left:1112.46px;top:705.00px;font-size:12.5px;line-height:12.5px;color:#444;transform:scaleX(0.8964);">%</span>
<svg class="r" style="left:1147.50px;top:701.50px;" width="18" height="17" viewBox="0 0 18 17" fill="none"><path d="M1.6 15 L16 2.4 M10.6 1.6 H16.6 V7.4 M1.2 9.6 V15.6 H7.2" stroke="#222" stroke-width="1.4"/></svg>
</div></body></html>
